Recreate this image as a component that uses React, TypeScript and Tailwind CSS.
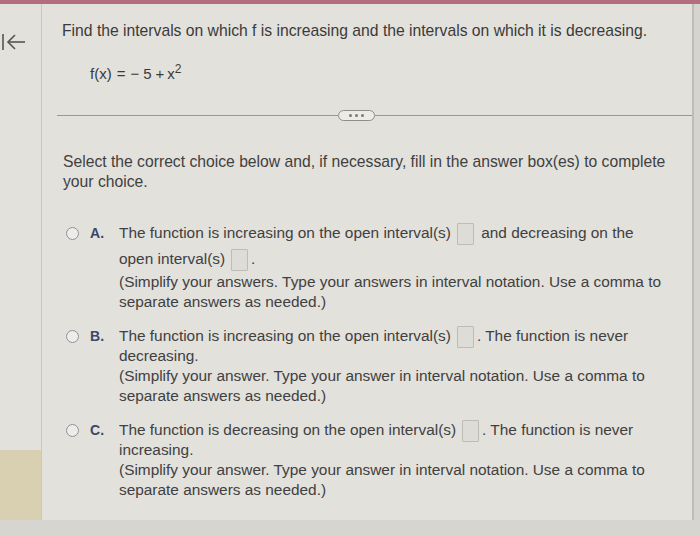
import React from 'react';

const AnswerBox = () => (
    <span className="inline-block align-middle w-[17px] h-[22px] -my-[3px] ml-[6px] mr-[3px] border border-[#bdbcb8] bg-[#dedcd7] rounded-[1px]" />
);

const Radio = () => (
    <span className="w-[13px] h-[13px] rounded-full border-[1.5px] border-[#8d929b] bg-[#eeece8] shrink-0" />
);

interface ChoiceProps {
    letter: string;
    lead: string;
    children: React.ReactNode;
    note: React.ReactNode;
}

const Choice: React.FC<ChoiceProps> = ({ letter, lead, children, note }) => (
    <div className="flex items-start">
        <div className={`flex items-center gap-[11px] w-[77px] pl-[24px] ${lead === 'tall' ? 'h-[26px]' : 'h-[20px]'}`}>
            <Radio />
            <span className="text-[14px] font-bold text-[#3b4763]">{letter}.</span>
        </div>
        <div className="flex-1 text-[15.4px] text-[#404040]">
            <div className={lead === 'tall' ? 'leading-[26px]' : 'leading-[20px]'}>{children}</div>
            <div className="leading-[20px]">{note}</div>
        </div>
    </div>
);

export default function App() {
    return (
        <div className="w-[700px] h-[536px] bg-[#e3e1dc] flex flex-col overflow-hidden" style={{ fontFamily: '"Liberation Sans", Arial, sans-serif' }}>
            <div className="h-[4px] bg-[#b56c7c]" />
            <div className="flex flex-1 min-h-0">
                <aside className="w-[42px] border-r border-[#c9c7c2] flex flex-col">
                    <div className="flex items-center pt-[28px] pl-[1px] text-[#555]">
                        <svg width="26" height="20" viewBox="0 0 26 20" fill="none" stroke="currentColor" strokeWidth="1.6">
                            <path d="M2 2v16" />
                            <path d="M24 10H7" />
                            <path d="M14 3l-7 7 7 7" />
                        </svg>
                    </div>
                    <div className="flex-1" />
                    <div className="h-[70px] bg-[#d8d0b0]" />
                </aside>
                <main className="flex-1 flex flex-col pr-[20px]">
                    <div className="pl-[20px] pt-[17px]">
                        <h1 className="text-[15.7px] leading-[20px] text-[#3a3a3a]">Find the intervals on which f is increasing and the intervals on which it is decreasing.</h1>
                        <div className="pl-[28px] pt-[23px] text-[15px] leading-[20px] text-[#3a3a3a]">
                            f(x)<span className="mx-[5px]">=</span>−<span className="mx-[4px]">5</span>+<span className="ml-[3px]">x</span><sup className="text-[12px] leading-none">2</sup>
                        </div>
                    </div>
                    <div className="flex items-center pl-[15px] mt-[26px] h-[11px] -mr-[20px]">
                        <div className="w-[281px] h-[1.5px] bg-[#9a9894]" />
                        <div className="w-[37px] h-[11px] rounded-full border border-[#8f8d89] bg-[#ecebe7] flex items-center justify-center gap-[3px]">
                            <span className="w-[3px] h-[3px] rounded-full bg-[#7b7975]" />
                            <span className="w-[3px] h-[3px] rounded-full bg-[#7b7975]" />
                            <span className="w-[3px] h-[3px] rounded-full bg-[#7b7975]" />
                        </div>
                        <div className="flex-1 h-[1.5px] bg-[#9a9894]" />
                    </div>
                    <p className="pl-[21px] pt-[31px] text-[15.7px] leading-[20px] text-[#404040]">
                        Select the correct choice below and, if necessary, fill in the answer box(es) to complete your choice.
                    </p>
                    <div className="flex flex-col gap-[14px] pt-[28px]">
                        <Choice
                            letter="A"
                            lead="tall"
                            note="(Simplify your answers. Type your answers in interval notation. Use a comma to separate answers as needed.)"
                        >
                            The function is increasing on the open interval(s)<AnswerBox /> and decreasing on the open interval(s)<AnswerBox />.
                        </Choice>
                        <Choice
                            letter="B"
                            lead="short"
                            note="(Simplify your answer. Type your answer in interval notation. Use a comma to separate answers as needed.)"
                        >
                            The function is increasing on the open interval(s)<AnswerBox />. The function is never decreasing.
                        </Choice>
                        <Choice
                            letter="C"
                            lead="short"
                            note="(Simplify your answer. Type your answer in interval notation. Use a comma to separate answers as needed.)"
                        >
                            The function is decreasing on the open interval(s)<AnswerBox />. The function is never increasing.
                        </Choice>
                    </div>
                    <div className="flex-1" />
                </main>
                <div className="w-[8px] border-l-[2px] border-[#bebcb7] bg-[#d6d4cf]" />
            </div>
            <div className="h-[16px] bg-[#d7d5d0]" />
        </div>
    );
}
